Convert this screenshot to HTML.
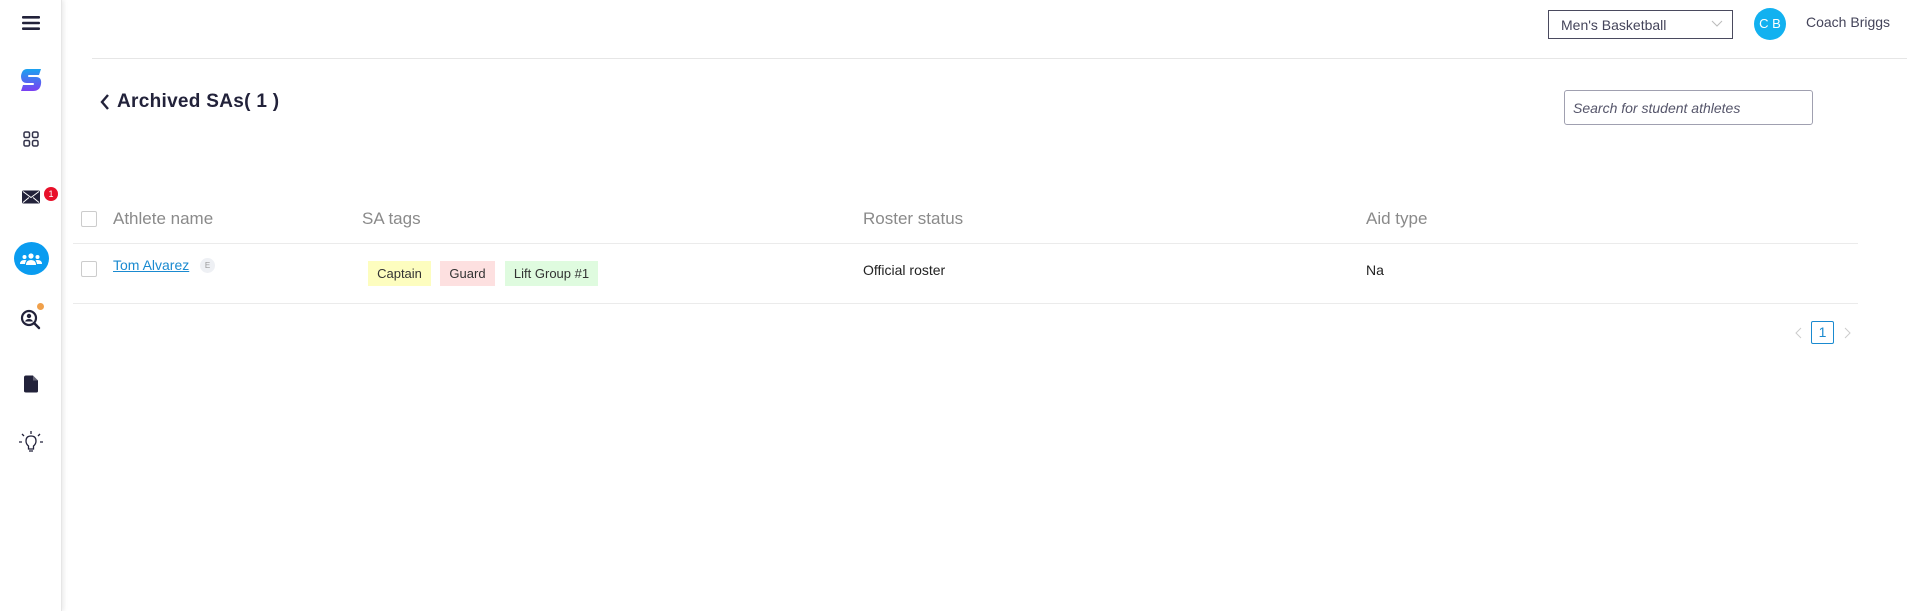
<!DOCTYPE html>
<html><head><meta charset="utf-8"><style>
*{margin:0;padding:0;box-sizing:border-box}
body{width:1907px;height:611px;background:#fff;font-family:"Liberation Sans",sans-serif;position:relative;overflow:hidden;color:#2a2a3e}
.side{position:absolute;left:0;top:0;width:62px;height:611px;background:#fff;border-right:1px solid #e6e6e6;box-shadow:2px 0 4px rgba(0,0,0,.08)}
.ic{position:absolute;left:31px;transform:translate(-50%,-50%)}
.abs{position:absolute}
.hdr{font-size:17px;color:#8a8a8a;top:209px}
.cb{position:absolute;width:16px;height:16px;border:1px solid #ccc;border-radius:2px;left:81px}
.tag{position:absolute;top:261px;height:25px;font-size:13px;line-height:25px;text-align:center;color:#333}
</style></head><body>
<div class="side">
  <svg class="ic" style="top:23px" width="18" height="14" viewBox="0 0 18 14"><rect y="0" width="18" height="2.6" rx="1" fill="#22223a"/><rect y="5.7" width="18" height="2.6" rx="1" fill="#22223a"/><rect y="11.4" width="18" height="2.6" rx="1" fill="#22223a"/></svg>
  <svg class="ic" style="top:80px" width="24" height="24" viewBox="0 0 24 24"><defs><linearGradient id="g" x1="0" y1="0" x2="0" y2="1"><stop offset="0" stop-color="#1aa3f0"/><stop offset="1" stop-color="#7b3ff2"/></linearGradient></defs><path d="M8 1h14l-2 6H10q-1 0-1 1t1 1h7q6 0 5 7-1 7-8 7H2l2-6h10q1 0 1-1t-1-1H8Q2 15 2 8 3 1 8 1z" fill="url(#g)"/></svg>
  <svg class="ic" style="top:139px" width="16" height="16" viewBox="0 0 16 16" fill="none" stroke="#33334a" stroke-width="1.5"><rect x="1" y="1" width="5.5" height="5.5" rx="1.5"/><rect x="9.5" y="1" width="5.5" height="5.5" rx="1.5"/><rect x="1" y="9.5" width="5.5" height="5.5" rx="1.5"/><rect x="9.5" y="9.5" width="5.5" height="5.5" rx="1.5"/></svg>
  <svg class="ic" style="top:197px" width="18" height="13" viewBox="0 0 18 13"><rect width="18" height="13" rx="1.5" fill="#22223a"/><path d="M1 1l8 6 8-6M1 12l6-5M17 12l-6-5" stroke="#fff" stroke-width="1" fill="none"/></svg>
  <div class="abs" style="left:44px;top:187px;width:14px;height:14px;border-radius:50%;background:#e8102a;color:#fff;font-size:9px;line-height:14px;text-align:center">1</div>
  <div class="abs" style="left:14px;top:242px;width:35px;height:33px;border-radius:50%;background:#0a9cf0"></div>
  <svg class="ic" style="top:259px" width="22" height="12" viewBox="0 0 22 12" fill="#fff"><circle cx="11" cy="3" r="2.6"/><circle cx="4.5" cy="4" r="2"/><circle cx="17.5" cy="4" r="2"/><path d="M6 12q0-5 5-5t5 5z"/><path d="M0 11q0-4 4.5-4 1.5 0 2 .5Q5 9 5 11z"/><path d="M22 11q0-4-4.5-4-1.5 0-2 .5Q17 9 17 11z"/></svg>
  <svg class="ic" style="top:320px" width="22" height="22" viewBox="0 0 22 22"><circle cx="9" cy="9" r="7" fill="none" stroke="#22223a" stroke-width="2.2"/><path d="M14 14l5 5" stroke="#22223a" stroke-width="2.4" stroke-linecap="round"/><circle cx="9" cy="7" r="2.2" fill="#22223a"/><path d="M5 12.5q1-2.5 4-2.5t4 2.5z" fill="#22223a"/></svg>
  <div class="abs" style="left:37px;top:303px;width:7px;height:7px;border-radius:50%;background:#f0a04a"></div>
  <svg class="ic" style="top:384px" width="14" height="17" viewBox="0 0 14 17"><path d="M2 0h7l5 5v10.5q0 1.5-1.5 1.5h-10.5Q0 17 0 15.5V2Q0 0 2 0z" fill="#22223a"/><path d="M9 0v5h5" fill="#fff" opacity=".3"/></svg>
  <svg class="ic" style="top:442px" width="26" height="24" viewBox="0 0 26 24" fill="none" stroke="#22223a" stroke-width="1.3"><path d="M13 6q-5 0-5 5 0 3 2.5 5v3h5v-3q2.5-2 2.5-5 0-5-5-5z"/><path d="M11 21h4M13 1v3M4 4l2 2M22 4l-2 2M1 12h3M22 12h3"/></svg>
</div>

<div class="abs" style="left:92px;top:58px;width:1815px;height:1px;background:#e6e6e6"></div>
<div class="abs" style="left:1548px;top:10px;width:185px;height:29px;border:1px solid #4a4a5e;font-size:14px;color:#44445a;padding:6px 12px">Men's Basketball</div>
<svg class="abs" style="left:1711px;top:20px" width="12" height="8" viewBox="0 0 12 8"><path d="M1 1l5 5 5-5" stroke="#bbb" fill="none"/></svg>
<div class="abs" style="left:1754px;top:8px;width:32px;height:32px;border-radius:50%;background:#12b1f0;color:#fff;font-size:13px;line-height:32px;text-align:center">C B</div>
<div class="abs" style="left:1806px;top:14px;font-size:14px;color:#44445a">Coach Briggs</div>

<svg class="abs" style="left:99px;top:93px" width="12" height="18" viewBox="0 0 12 18"><path d="M9 2L3 9l6 7" stroke="#22223a" stroke-width="2.4" fill="none"/></svg>
<div class="abs" style="left:117px;top:91px;font-size:19px;font-weight:bold;color:#22223a;letter-spacing:.3px">Archived SAs( 1 )</div>

<div class="abs" style="left:1564px;top:90px;width:249px;height:35px;border:1px solid #a0a0b0;border-radius:3px;font-size:14px;font-style:italic;color:#55556a;padding:9px 8px">Search for student athletes</div>

<div class="cb" style="top:211px"></div>
<div class="abs hdr" style="left:113px">Athlete name</div>
<div class="abs hdr" style="left:362px">SA tags</div>
<div class="abs hdr" style="left:863px">Roster status</div>
<div class="abs hdr" style="left:1366px">Aid type</div>
<div class="abs" style="left:73px;top:243px;width:1785px;height:1px;background:#ebebeb"></div>

<div class="cb" style="top:261px"></div>
<div class="abs" style="left:113px;top:257px;font-size:14px;color:#1a8ad0;text-decoration:underline">Tom Alvarez</div>
<div class="abs" style="left:200px;top:258px;width:15px;height:15px;border-radius:50%;background:#eef0f4;color:#999;font-size:8px;line-height:15px;text-align:center">E</div>
<div class="tag" style="left:368px;width:63px;background:#fdfdbf">Captain</div>
<div class="tag" style="left:440px;width:55px;background:#fde0e0">Guard</div>
<div class="tag" style="left:505px;width:93px;background:#dffbdf">Lift Group #1</div>
<div class="abs" style="left:863px;top:262px;font-size:14px;color:#222">Official roster</div>
<div class="abs" style="left:1366px;top:262px;font-size:14px;color:#222">Na</div>
<div class="abs" style="left:73px;top:303px;width:1785px;height:1px;background:#ebebeb"></div>

<svg class="abs" style="left:1795px;top:327px" width="8" height="12" viewBox="0 0 8 12"><path d="M6 1L1 6l5 5" stroke="#ccc" fill="none"/></svg>
<div class="abs" style="left:1811px;top:321px;width:23px;height:23px;border:1px solid #1a8ad0;border-radius:2px;color:#1a8ad0;font-size:14px;line-height:21px;text-align:center">1</div>
<svg class="abs" style="left:1843px;top:327px" width="8" height="12" viewBox="0 0 8 12"><path d="M2 1l5 5-5 5" stroke="#ccc" fill="none"/></svg>
</body></html>
